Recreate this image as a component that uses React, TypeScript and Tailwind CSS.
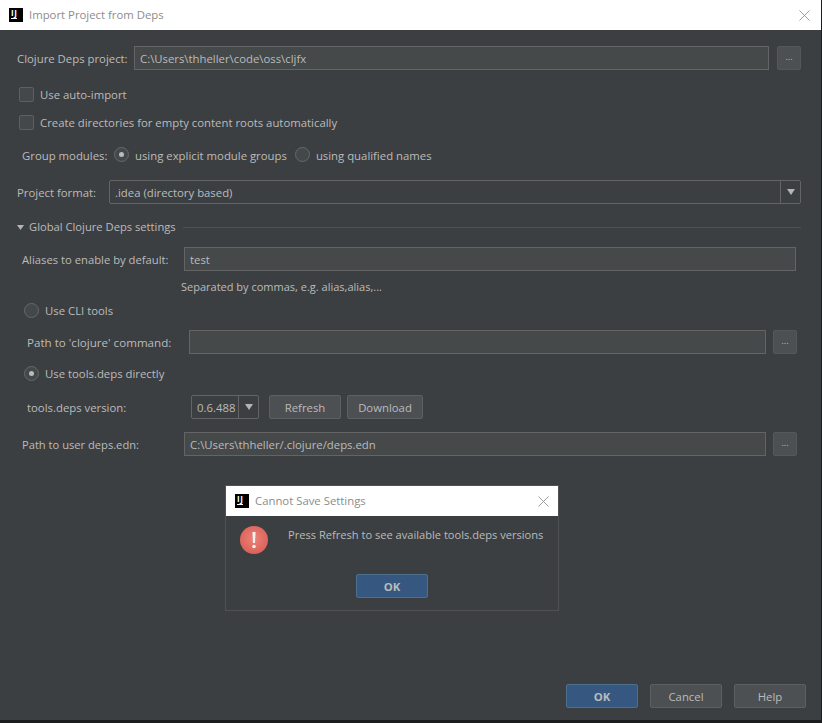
import React from 'react';

const font = { fontFamily: '"Open Sans", "Noto Sans", sans-serif' };

function IdeaLogo() {
  return (
    <div className="w-[14px] h-[14px] bg-black flex flex-col items-start pl-[2px] pt-[1px] shrink-0">
      <span className="text-[8px] leading-[8px] font-bold tracking-[0.5px] text-white">IJ</span>
      <span className="w-[6px] h-[1px] bg-white mt-[1px]" />
    </div>
  );
}

function CloseIcon({ size }: { size: number }) {
  return (
    <svg width={size} height={size} viewBox="0 0 12 12" fill="none" stroke="#8a8a8a" strokeWidth="0.9">
      <path d="M0.5 0.5L11.5 11.5M11.5 0.5L0.5 11.5" />
    </svg>
  );
}

function Checkbox() {
  return <span className="w-[15px] h-[15px] rounded-[2px] border border-[#5e6060] bg-[#43494a] shrink-0" />;
}

function Radio({ on }: { on?: boolean }) {
  return (
    <span className="w-[15px] h-[15px] rounded-full border border-[#666969] bg-[#43494a] flex items-center justify-center shrink-0">
      {on && <span className="w-[5px] h-[5px] rounded-full bg-[#bbbbbb]" />}
    </span>
  );
}

function Field({ value, className }: { value?: string; className: string }) {
  return (
    <div className={`h-6 border border-[#646464] bg-[#45494a] pl-[5px] leading-[23px] text-[#bbbbbb] ${className}`}>
      {value}
    </div>
  );
}

function Dots({ className }: { className: string }) {
  return (
    <div className={`w-6 h-6 rounded-[2px] border border-[#555859] bg-[#4c5052] flex items-center justify-center text-[9px] leading-none text-[#bbbbbb] pb-[4px] ${className}`}>
      ...
    </div>
  );
}

function Caret() {
  return (
    <svg width="8" height="6" viewBox="0 0 8 6" fill="#b4b4b4">
      <path d="M0 0H8L4 6Z" />
    </svg>
  );
}

function Btn({ label, primary, className }: { label: string; primary?: boolean; className: string }) {
  const look = primary
    ? 'border-[#4c708c] bg-[#365880] text-[#bbbbbb] font-bold'
    : 'border-[#5e6060] bg-[#4c5052] text-[#bbbbbb]';
  return (
    <div className={`h-6 rounded-[2px] border flex items-center justify-center pt-[2px] ${look} ${className}`}>
      {label}
    </div>
  );
}

export default function App() {
  return (
    <div style={font} className="relative w-[822px] h-[723px] overflow-hidden bg-[#1b1c1e] text-[11.35px] text-[#bbbbbb]">
      <div className="w-[821px] h-[720px] flex flex-col bg-[#3c3f41]">
        <div className="h-[30px] bg-white flex items-center pl-[9px] pr-[11px] shrink-0">
          <IdeaLogo />
          <span className="ml-[6px] text-[#8c8c8c]">Import Project from Deps</span>
          <span className="ml-auto flex"><CloseIcon size={11} /></span>
        </div>

        <div className="relative flex-1 flex flex-col">
          <div className="flex items-center h-6 mt-4 pl-[17px]">
            <span className="w-[117px] pt-[2px]">Clojure Deps project:</span>
            <Field value="C:\Users\thheller\code\oss\cljfx" className="w-[635px]" />
            <Dots className="ml-2" />
          </div>

          <div className="flex items-center gap-[6px] h-[15px] mt-[17px] pl-[19px]">
            <Checkbox />
            <span>Use auto-import</span>
          </div>
          <div className="flex items-center gap-[6px] h-[15px] mt-[13px] pl-[19px]">
            <Checkbox />
            <span>Create directories for empty content roots automatically</span>
          </div>

          <div className="flex items-center h-[15px] mt-[17px] pl-[22px]">
            <span className="w-[92px] pt-[1px]">Group modules:</span>
            <Radio on />
            <span className="ml-[6px] pt-[1px]">using explicit module groups</span>
            <span className="ml-[8px]"><Radio /></span>
            <span className="ml-[6px] pt-[1px]">using qualified names</span>
          </div>

          <div className="flex items-center h-6 mt-[18px] pl-[17px]">
            <span className="w-[92px] pt-[2px]">Project format:</span>
            <div className="w-[692px] h-6 rounded-[2px] border border-[#646464] bg-[#3c3f41] flex items-center">
              <span className="flex-1 pl-[5px] pt-[2px]">.idea (directory based)</span>
              <span className="w-5 h-full border-l border-[#646464] flex items-center justify-center"><Caret /></span>
            </div>
          </div>

          <div className="flex items-center h-4 mt-[15px] pl-[17px] pr-[20px]">
            <svg width="7" height="5" viewBox="0 0 7 5" fill="#b4b4b4"><path d="M0 0H7L3.5 5Z" /></svg>
            <span className="ml-[5px] text-[11.2px]">Global Clojure Deps settings</span>
            <span className="ml-[7px] flex-1 h-px bg-[#515151]" />
          </div>

          <div className="flex items-center h-6 mt-[12px] pl-[22px]">
            <span className="w-[162px] pt-[2px] text-[11.25px]">Aliases to enable by default:</span>
            <Field value="test" className="w-[612px]" />
          </div>
          <div className="h-4 mt-2 pl-[181px] text-[11px] leading-4">Separated by commas, e.g. alias,alias,...</div>

          <div className="flex items-center gap-[6px] h-[15px] mt-[8px] pl-[24px]">
            <Radio />
            <span>Use CLI tools</span>
          </div>

          <div className="flex items-center h-6 mt-[12px] pl-[27px]">
            <span className="w-[162px] pt-[2px] text-[11.6px]">Path to 'clojure' command:</span>
            <Field className="w-[577px]" />
            <Dots className="ml-[7px]" />
          </div>

          <div className="flex items-center gap-[6px] h-[15px] mt-[12px] pl-[24px]">
            <Radio on />
            <span>Use tools.deps directly</span>
          </div>

          <div className="flex items-center h-6 mt-[14px] pl-[27px]">
            <span className="w-[164px] pt-[2px]">tools.deps version:</span>
            <div className="w-[68px] h-6 rounded-[2px] border border-[#646464] flex items-center">
              <span className="flex-1 pl-[5px] pt-[2px]">0.6.488</span>
              <span className="w-[20px] h-full border-l border-[#646464] flex items-center justify-center"><Caret /></span>
            </div>
            <Btn label="Refresh" className="w-[72px] ml-[10px]" />
            <Btn label="Download" className="w-[76px] ml-[6px]" />
          </div>

          <div className="flex items-center h-6 mt-[13px] pl-[22px]">
            <span className="w-[162px] pt-[2px] text-[11.15px]">Path to user deps.edn:</span>
            <Field value="C:\Users\thheller/.clojure/deps.edn" className="w-[582px]" />
            <Dots className="ml-[7px]" />
          </div>

          <div className="mt-auto mb-3 flex justify-end pr-[15px]">
            <Btn label="OK" primary className="w-[72px]" />
            <Btn label="Cancel" className="w-[72px] ml-3" />
            <Btn label="Help" className="w-[72px] ml-3" />
          </div>
        </div>
      </div>

      {/* modal over the settings window */}
      <div className="absolute left-[226px] top-[486px] w-[332px] h-[124px] flex flex-col bg-[#3c3f41] shadow-[0_0_0_1px_#515151]">
        <div className="h-[30px] bg-white flex items-center pl-[9px] pr-[9px] shrink-0">
          <IdeaLogo />
          <span className="ml-[6px] text-[#8c8c8c]">Cannot Save Settings</span>
          <span className="ml-auto flex"><CloseIcon size={11} /></span>
        </div>
        <div className="flex pl-[14px] pt-[10px]">
          <svg width="28" height="28" viewBox="0 0 28 28" className="shrink-0">
            <defs>
              <radialGradient id="err" cx="50%" cy="45%" r="55%">
                <stop offset="0%" stopColor="#ee8278" />
                <stop offset="100%" stopColor="#d9625a" />
              </radialGradient>
            </defs>
            <circle cx="14" cy="14" r="14" fill="url(#err)" />
            <path d="M12.4 6H15.6L15 17H13Z" fill="#f4f0ee" />
            <circle cx="14" cy="20.5" r="1.8" fill="#f4f0ee" />
          </svg>
          <span className="ml-[20px] pt-[1px] whitespace-nowrap text-[11.1px]">Press Refresh to see available tools.deps versions</span>
        </div>
        <div className="flex justify-center mt-[20px]">
          <Btn label="OK" primary className="w-[72px]" />
        </div>
      </div>
    </div>
  );
}
